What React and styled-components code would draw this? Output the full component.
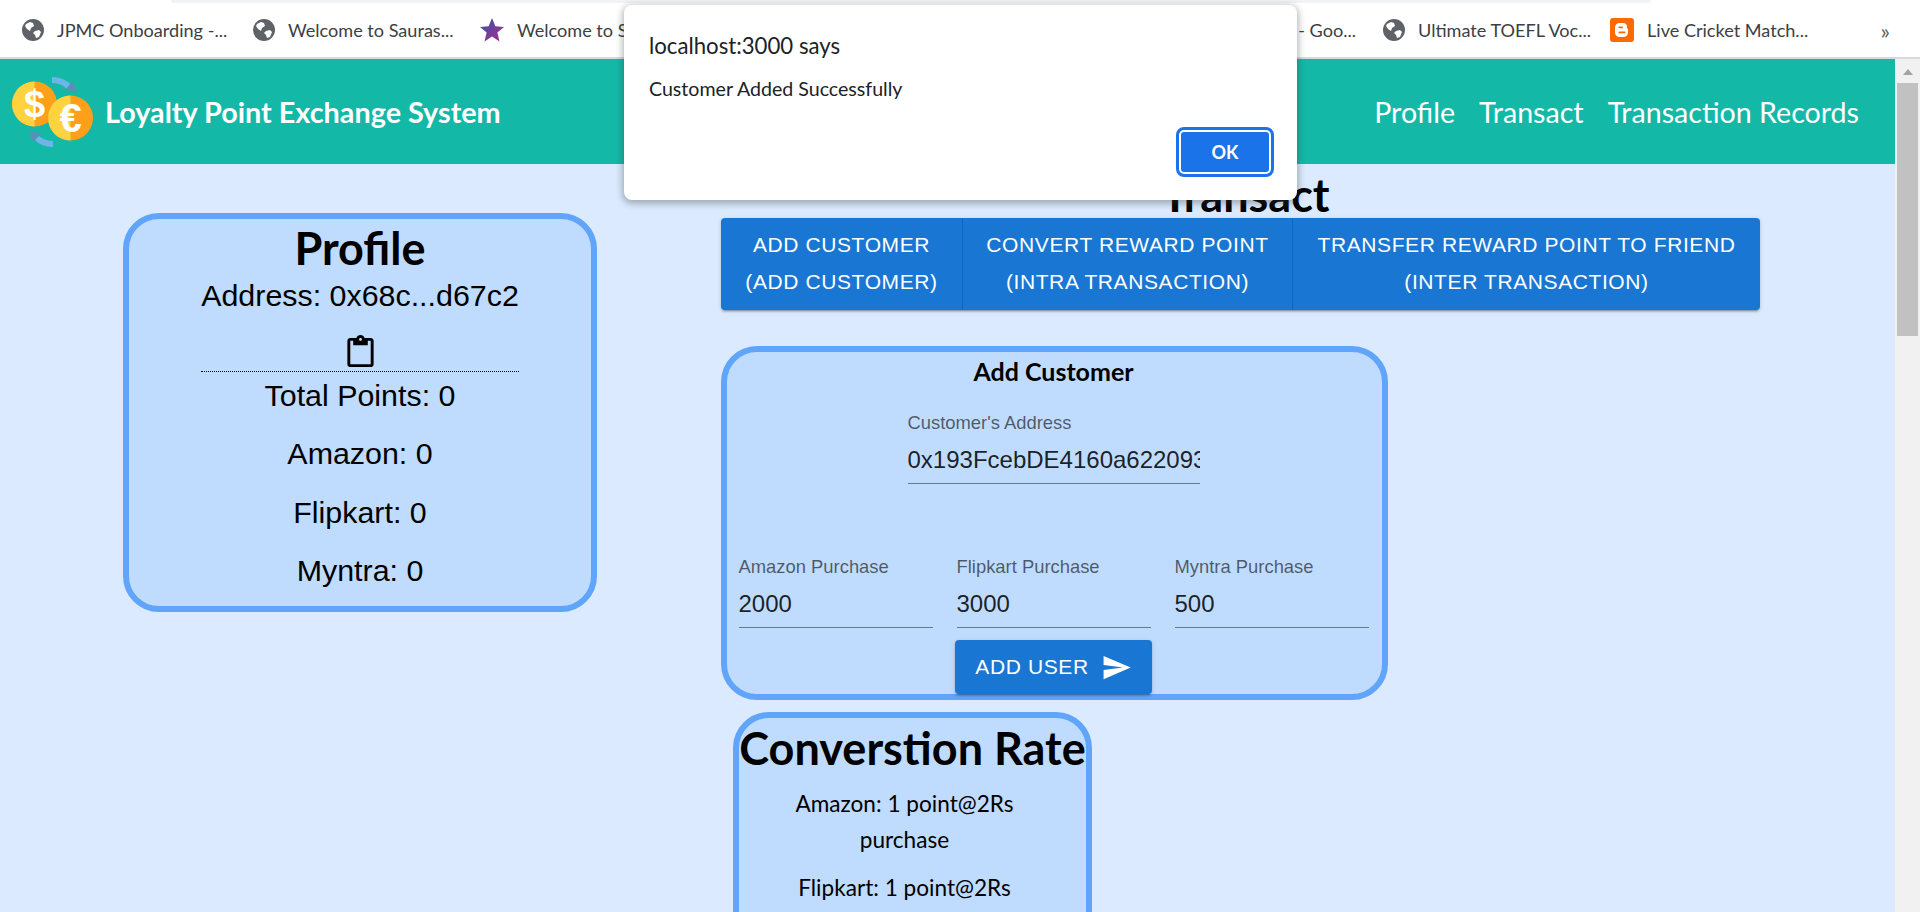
import React from 'react'
import styled, { createGlobalStyle } from 'styled-components'

const SEGOE = `Lato, "Open Sans", sans-serif`
const ARIAL = `"Liberation Sans", Arial, sans-serif`

const GlobalStyle = createGlobalStyle`
  html, body {
    margin: 0;
    padding: 0;
    background: #dbeafe;
  }
  * {
    box-sizing: border-box;
  }
`

const Screen = styled.div`
  position: relative;
  display: flex;
  flex-direction: column;
  width: 1920px;
  height: 912px;
  overflow: hidden;
  background: #dbeafe;
`

const BookmarkBar = styled.div`
  position: relative;
  flex: none;
  display: flex;
  align-items: center;
  gap: 13px;
  height: 59px;
  padding: 3px 30px 0 22px;
  background: #fff;
  border-bottom: 2px solid #d9d9d9;
  overflow: hidden;
`

const TabEdge = styled.div`
  position: absolute;
  top: 0;
  left: 171px;
  width: 1480px;
  height: 3px;
  background: #f1f3f4;
  border-radius: 0 0 8px 8px;
`

const Bookmark = styled.div`
  flex: none;
  display: flex;
  align-items: center;
  gap: 13px;
  width: ${({ $width }) => $width}px;
  font-family: ${SEGOE};
  font-size: 18.1px;
  color: #3c4043;
  white-space: nowrap;
`

const TrailingBookmark = styled(Bookmark)`
  justify-content: flex-end;
  padding-right: 14px;
`

const MoreMark = styled.div`
  margin-left: auto;
  font-family: ${SEGOE};
  font-size: 22px;
  color: #5f6368;
`

const Viewport = styled.div`
  flex: 1;
  min-height: 0;
  display: flex;
`

const Page = styled.div`
  flex: 1;
  min-width: 0;
  display: flex;
  flex-direction: column;
`

const Navbar = styled.nav`
  flex: none;
  display: flex;
  align-items: center;
  justify-content: space-between;
  height: 105px;
  padding: 0 36px 0 12px;
  background: #14b8a6;
  color: #fff;
  font-family: ${SEGOE};
`

const Brand = styled.div`
  display: flex;
  align-items: center;
  gap: 11px;
  font-size: 28.8px;
  font-weight: 700;
`

const NavLinks = styled.div`
  display: flex;
  gap: 24px;
  font-size: 28.6px;
`

const NavLink = styled.a`
  color: #fff;
`

const Content = styled.main`
  flex: 1;
  min-height: 0;
  display: flex;
  align-items: flex-start;
  padding-left: 123px;
  gap: 124px;
`

const Card = styled.section`
  background: #bfdbfe;
  border: 6px solid #60a5fa;
  border-radius: 36px;
  text-align: center;
  color: #000;
`

const ProfileCard = styled(Card)`
  flex: none;
  width: 474px;
  height: 399px;
  margin-top: 49px;
  padding: 0 72px;
  font-family: ${ARIAL};
`

const CardHeading = styled.h2`
  margin: 0;
  font-family: ${SEGOE};
  font-weight: 700;
`

const ProfileHeading = styled(CardHeading)`
  height: 60px;
  font-size: 45px;
  line-height: 58px;
`

const AddressBlock = styled.div`
  border-bottom: 1px dotted #000;
  height: 93px;
  font-size: 30.4px;
  line-height: 33px;
`

const CopyIcon = styled.svg`
  display: block;
  width: 35px;
  height: 35px;
  margin: 23px auto 0;
  fill: #000;
`

const Stat = styled.p`
  margin: 25.3px 0 0;
  font-size: 30.4px;
  line-height: 33px;

  &:first-of-type {
    margin-top: 7px;
  }
`

const TransactColumn = styled.div`
  flex: none;
  width: 1039px;
`

const TransactHeading = styled.h1`
  margin: 0;
  height: 54px;
  padding-left: 10px;
  font-family: ${SEGOE};
  font-size: 45px;
  font-weight: 700;
  line-height: 62px;
  text-align: center;
  color: #000;
`

const TabGroup = styled.div`
  display: flex;
  height: 92px;
  background: #1976d2;
  border-radius: 4px;
  box-shadow: 0 3px 1px -2px rgba(0, 0, 0, 0.2), 0 2px 2px 0 rgba(0, 0, 0, 0.14), 0 1px 5px 0 rgba(0, 0, 0, 0.12);
`

const Tab = styled.div`
  flex: none;
  width: ${({ $width }) => $width}px;
  display: flex;
  flex-direction: column;
  justify-content: center;
  padding-bottom: 2px;
  font-family: ${ARIAL};
  font-size: 21px;
  line-height: 37px;
  letter-spacing: 0.6px;
  text-align: center;
  text-transform: uppercase;
  color: #fff;
  white-space: nowrap;

  & + & {
    border-left: 1px solid #1565c0;
  }
`

const AddCard = styled(Card)`
  width: 667px;
  height: 354px;
  margin-top: 36px;
  padding: 0 13px 0 11px;
`

const AddHeading = styled(CardHeading)`
  height: 40px;
  font-size: 25px;
  line-height: 38px;
`

const AddressRow = styled.div`
  display: flex;
  justify-content: center;
  margin-top: 21px;
`

const PurchaseRow = styled.div`
  display: flex;
  justify-content: center;
  gap: 24px;
  margin-top: 73px;
`

const Field = styled.label`
  display: block;
  width: ${({ $width }) => $width}px;
  font-family: ${ARIAL};
  text-align: left;
`

const FieldLabel = styled.span`
  display: block;
  height: 21px;
  font-size: 18.4px;
  line-height: 20px;
  color: rgba(0, 0, 0, 0.6);
`

const FieldInput = styled.input`
  display: block;
  width: 100%;
  height: 50px;
  padding: 2px 0 0;
  border: 0;
  border-bottom: 1px solid rgba(0, 0, 0, 0.45);
  border-radius: 0;
  background: transparent;
  outline: none;
  font-family: ${ARIAL};
  font-size: 24px;
  color: rgba(0, 0, 0, 0.87);
`

const SubmitButton = styled.button`
  display: flex;
  align-items: center;
  justify-content: center;
  gap: 12px;
  width: 197px;
  height: 54px;
  margin: 12px auto 0;
  padding: 0;
  border: 0;
  border-radius: 4px;
  background: #1976d2;
  box-shadow: 0 3px 1px -2px rgba(0, 0, 0, 0.2), 0 2px 2px 0 rgba(0, 0, 0, 0.14), 0 1px 5px 0 rgba(0, 0, 0, 0.12);
  font-family: ${ARIAL};
  font-size: 21px;
  letter-spacing: 0.6px;
  color: #fff;
`

const SendIcon = styled.svg`
  width: 31px;
  height: 31px;
  fill: #fff;
`

const RateCard = styled(Card)`
  width: 359px;
  height: 300px;
  margin: 12px 0 0 12px;
  font-family: ${SEGOE};
  font-size: 22.6px;
  line-height: 36px;
`

const RateHeading = styled(CardHeading)`
  height: 68px;
  font-size: 45px;
  line-height: 60px;
  white-space: nowrap;
`

const RateLine = styled.p`
  margin: 0 0 12px;
  padding: 0 38px 0 22px;
`

const Scrollbar = styled.div`
  flex: none;
  width: 25px;
  display: flex;
  flex-direction: column;
  align-items: center;
  background: #f1f1f1;
`

const ScrollArrow = styled.div`
  width: 0;
  height: 0;
  margin-top: 10px;
  border-left: 5.5px solid transparent;
  border-right: 5.5px solid transparent;
  border-bottom: 6px solid #a3a3a3;
`

const ScrollThumb = styled.div`
  width: 21px;
  height: 253px;
  margin-top: 8px;
  background: #c1c1c1;
`

const AlertBox = styled.div`
  position: absolute;
  top: 5px;
  left: 624px;
  width: 673px;
  height: 195px;
  padding: 27px 26px 0 25px;
  background: #fff;
  border-radius: 8px;
  box-shadow: 0 2px 6px 2px rgba(60, 64, 67, 0.35);
  font-family: ${SEGOE};
  color: #202124;
`

const AlertTitle = styled.div`
  font-size: 22.2px;
  line-height: 28px;
`

const AlertText = styled.div`
  margin-top: 17px;
  font-size: 19.6px;
  line-height: 24px;
`

const AlertActions = styled.div`
  display: flex;
  justify-content: flex-end;
  margin-top: 29px;
`

const AlertButton = styled.button`
  width: 92px;
  height: 44px;
  padding: 0;
  border: 2px solid #fff;
  border-radius: 5px;
  outline: 3px solid #1a73e8;
  background: #1a73e8;
  font-family: ${SEGOE};
  font-size: 18px;
  font-weight: 700;
  color: #fff;
`

function GlobeIcon() {
  return (
    <svg width="22" height="22" viewBox="0 0 22 22">
      <circle cx="11" cy="11" r="11" fill="#5f6368" />
      <path d="M4 5l4-2 3 1 1 3-3 2-1 3-3-2-2-3zM13 12l4-1 2 2-2 5-3 1-1-3-2-2z" fill="#fff" />
    </svg>
  )
}

function StarIcon() {
  return (
    <svg width="24" height="24" viewBox="0 0 24 24">
      <defs>
        <linearGradient id="star" x1="0" y1="0" x2="1" y2="1">
          <stop offset="0" stopColor="#2f57a8" />
          <stop offset="1" stopColor="#b02a8c" />
        </linearGradient>
      </defs>
      <path d="M12 0l3.4 8.3 8.6.6-6.6 5.6 2.1 8.9L12 18.6l-7.5 4.8 2.1-8.9L0 8.9l8.6-.6z" fill="url(#star)" />
    </svg>
  )
}

function BloggerIcon() {
  return (
    <svg width="24" height="24" viewBox="0 0 24 24">
      <rect width="24" height="24" rx="3" fill="#ff6a00" />
      <path d="M9.5 5h3.5a4 4 0 0 1 4 4v1a1.5 1.5 0 0 0 1 1v3.5a4.5 4.5 0 0 1-4.5 4.5h-4A4.5 4.5 0 0 1 5 14.5v-5A4.5 4.5 0 0 1 9.5 5z" fill="#fff" />
      <rect x="8.5" y="8.5" width="4.5" height="1.8" rx=".9" fill="#ff6a00" />
      <rect x="8.5" y="13.5" width="7" height="1.8" rx=".9" fill="#ff6a00" />
    </svg>
  )
}

function Logo() {
  return (
    <svg width="82" height="74" viewBox="0 0 82 74">
      <path d="M40 2q12 0 19 8l-4 4q-6-6-15-6z" fill="#6fb4e8" />
      <path d="M65 17L53 15l8-9z" fill="#5a8fb8" />
      <path d="M41 72q-12 0-18-7l4-4q6 5 14 5z" fill="#6fb4e8" />
      <path d="M17 56l12 2-8 9z" fill="#5a8fb8" />
      <circle cx="22.5" cy="29" r="22.5" fill="#ff9f1a" />
      <path d="M22.5 6.5a22.5 22.5 0 0 0 0 45z" fill="#ffd23f" />
      <text x="22.5" y="42" textAnchor="middle" fontFamily="Liberation Sans" fontSize="38" fontWeight="700" fill="#fff">$</text>
      <circle cx="58.5" cy="43" r="22.5" fill="#ff9f1a" />
      <path d="M58.5 20.5a22.5 22.5 0 0 0 0 45z" fill="#ffd23f" />
      <text x="58.5" y="57" textAnchor="middle" fontFamily="Liberation Sans" fontSize="40" fontWeight="700" fill="#fff">€</text>
    </svg>
  )
}

export default function App() {
  return (
    <Screen>
      <GlobalStyle />
      <BookmarkBar>
        <TabEdge />
        <Bookmark $width={218}><GlobeIcon />JPMC Onboarding -...</Bookmark>
        <Bookmark $width={214}><GlobeIcon />Welcome to Sauras...</Bookmark>
        <Bookmark $width={230}><StarIcon />Welcome to Sauras...</Bookmark>
        <TrailingBookmark $width={647}>- Goo...</TrailingBookmark>
        <Bookmark $width={214}><GlobeIcon />Ultimate TOEFL Voc...</Bookmark>
        <Bookmark $width={200}><BloggerIcon />Live Cricket Match...</Bookmark>
        <MoreMark>»</MoreMark>
      </BookmarkBar>
      <Viewport>
        <Page>
          <Navbar>
            <Brand>
              <Logo />
              Loyalty Point Exchange System
            </Brand>
            <NavLinks>
              <NavLink>Profile</NavLink>
              <NavLink>Transact</NavLink>
              <NavLink>Transaction Records</NavLink>
            </NavLinks>
          </Navbar>
          <Content>
            <ProfileCard>
              <ProfileHeading>Profile</ProfileHeading>
              <AddressBlock>
                Address: 0x68c...d67c2
                <CopyIcon viewBox="0 0 24 24">
                  <path d="M19 2h-4.180C14.400.84 13.300 0 12 0c-1.300 0-2.400.84-2.820 2H5c-1.100 0-2 .9-2 2v16c0 1.100.9 2 2 2h14c1.100 0 2-.9 2-2V4c0-1.100-.9-2-2-2zm-7 0c.55 0 1 .45 1 1s-.45 1-1 1-1-.45-1-1 .45-1 1-1zm7 18H5V4h2v3h10V4h2v16z" />
                </CopyIcon>
              </AddressBlock>
              <Stat>Total Points: 0</Stat>
              <Stat>Amazon: 0</Stat>
              <Stat>Flipkart: 0</Stat>
              <Stat>Myntra: 0</Stat>
            </ProfileCard>
            <TransactColumn>
              <TransactHeading>Transact</TransactHeading>
              <TabGroup>
                <Tab $width={241}><span>Add Customer</span><span>(Add Customer)</span></Tab>
                <Tab $width={330}><span>Convert Reward Point</span><span>(Intra Transaction)</span></Tab>
                <Tab $width={468}><span>Transfer Reward Point to Friend</span><span>(Inter Transaction)</span></Tab>
              </TabGroup>
              <AddCard>
                <AddHeading>Add Customer</AddHeading>
                <AddressRow>
                  <Field $width={292}>
                    <FieldLabel>Customer's Address</FieldLabel>
                    <FieldInput readOnly value="0x193FcebDE4160a622093a1b4C7e" />
                  </Field>
                </AddressRow>
                <PurchaseRow>
                  <Field $width={194}>
                    <FieldLabel>Amazon Purchase</FieldLabel>
                    <FieldInput readOnly value="2000" />
                  </Field>
                  <Field $width={194}>
                    <FieldLabel>Flipkart Purchase</FieldLabel>
                    <FieldInput readOnly value="3000" />
                  </Field>
                  <Field $width={194}>
                    <FieldLabel>Myntra Purchase</FieldLabel>
                    <FieldInput readOnly value="500" />
                  </Field>
                </PurchaseRow>
                <SubmitButton>
                  ADD USER
                  <SendIcon viewBox="0 0 24 24">
                    <path d="M2.010 21 23 12 2.010 3 2 10l15 2-15 2z" />
                  </SendIcon>
                </SubmitButton>
              </AddCard>
              <RateCard>
                <RateHeading>Converstion Rate</RateHeading>
                <RateLine>Amazon: 1 point@2Rs purchase</RateLine>
                <RateLine>Flipkart: 1 point@2Rs purchase</RateLine>
              </RateCard>
            </TransactColumn>
          </Content>
        </Page>
        <Scrollbar>
          <ScrollArrow />
          <ScrollThumb />
        </Scrollbar>
      </Viewport>
      <AlertBox>
        <AlertTitle>localhost:3000 says</AlertTitle>
        <AlertText>Customer Added Successfully</AlertText>
        <AlertActions>
          <AlertButton>OK</AlertButton>
        </AlertActions>
      </AlertBox>
    </Screen>
  )
}
